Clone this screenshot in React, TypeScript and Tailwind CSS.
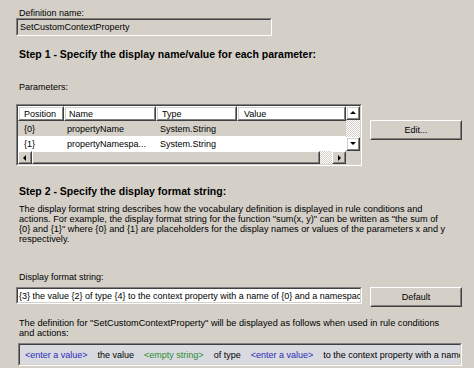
import React from 'react'

function Sunken({ className = '', inner = '', children }: { className?: string; inner?: string; children?: React.ReactNode }) {
    return (
        <div className={`border border-t-[#808080] border-l-[#808080] border-b-white border-r-white ${className}`}>
            <div className={`h-full border border-t-[#404040] border-l-[#404040] border-b-[#d4d0c8] border-r-[#d4d0c8] overflow-hidden ${inner}`}>
                {children}
            </div>
        </div>
    )
}

function Raised({ className = '', inner = '', children }: { className?: string; inner?: string; children?: React.ReactNode }) {
    return (
        <div className={`border border-t-white border-l-white border-b-[#404040] border-r-[#404040] ${className}`}>
            <div className={`h-full border border-t-[#d4d0c8] border-l-[#d4d0c8] border-b-[#808080] border-r-[#808080] flex items-center justify-center ${inner}`}>
                {children}
            </div>
        </div>
    )
}

function Arrow({ dir }: { dir: 'up' | 'down' | 'left' | 'right' }) {
    const pts = {
        up: '1,5 4,2 7,5',
        down: '1,2 4,5 7,2',
        left: '5,1 2,4 5,7',
        right: '3,1 6,4 3,7',
    }[dir]
    return (
        <svg width="8" height="8" viewBox="0 0 8 8">
            <polygon points={pts} fill="#000" />
        </svg>
    )
}

const track = 'bg-[repeating-conic-gradient(#ffffff_0_25%,#d4d0c8_0_50%)] bg-[length:2px_2px]'

function ParamList() {
    const rows = [
        { pos: '{0}', name: 'propertyName', type: 'System.String', bg: 'bg-[#d4d0c8]' },
        { pos: '{1}', name: 'propertyNamespa...', type: 'System.String', bg: 'bg-white' },
    ]
    return (
        <Sunken className="w-[346px] h-[62px]" inner="flex flex-col bg-white">
            <div className="flex h-[45px]">
                <div className="flex-1 flex flex-col min-w-0">
                    <div className="flex h-[15px]">
                        <Raised className="w-[46px]" inner="!justify-start pl-[4px]">Position</Raised>
                        <Raised className="w-[92px]" inner="!justify-start pl-[3px]">Name</Raised>
                        <Raised className="w-[81px]" inner="!justify-start pl-[4px]">Type</Raised>
                        <Raised className="flex-1" inner="!justify-start pl-[5px]">Value</Raised>
                    </div>
                    {rows.map(r => (
                        <div key={r.pos} className={`flex h-[15px] items-center whitespace-nowrap ${r.bg}`}>
                            <div className="w-[46px] pl-[6px]">{r.pos}</div>
                            <div className="w-[92px] pl-[3px]">{r.name}</div>
                            <div className="w-[81px] pl-[4px]">{r.type}</div>
                            <div className="flex-1" />
                        </div>
                    ))}
                </div>
                <div className="w-[14px] flex flex-col">
                    <Raised className="h-[14px]"><Arrow dir="up" /></Raised>
                    <div className={`flex-1 ${track}`} />
                    <Raised className="h-[14px]"><Arrow dir="down" /></Raised>
                </div>
            </div>
            <div className="flex flex-1 bg-[#d4d0c8]">
                <Raised className="w-[14px]"><Arrow dir="left" /></Raised>
                <Raised className="w-[288px]" />
                <div className={`flex-1 ${track}`} />
                <Raised className="w-[14px]"><Arrow dir="right" /></Raised>
                <div className="w-[14px] bg-[#d4d0c8]" />
            </div>
        </Sunken>
    )
}

export default function App() {
    return (
        <div className="w-[474px] h-[368px] overflow-hidden bg-[#d4d0c8] text-black text-[9px] leading-[10px] font-['Liberation_Sans',Arial,sans-serif] pl-[16px] pt-[8px]">
            <div className="pl-[3px] h-[10px]">Definition name:</div>
            <Sunken className="w-[256px] h-[18px]" inner="flex items-center pl-[2px] bg-[#d4d0c8]">
                SetCustomContextProperty
            </Sunken>

            <div className="mt-[13px] pl-[3px] h-[10px] font-bold text-[10.5px] whitespace-nowrap">
                Step 1 - Specify the display name/value for each parameter:
            </div>

            <div className="mt-[23px] pl-[3px] h-[10px]">Parameters:</div>

            <div className="mt-[12px] flex items-start">
                <ParamList />
                <Raised className="ml-[8px] mt-[16px] w-[92px] h-[20px]">Edit...</Raised>
            </div>

            <div className="mt-[20px] pl-[3px] h-[10px] font-bold text-[10.5px] whitespace-nowrap">
                Step 2 - Specify the display format string:
            </div>

            <p className="mt-[8px] pl-[3px] whitespace-nowrap text-[9.2px]">
                The display format string describes how the vocabulary definition is displayed in rule conditions and
                <br />
                actions. For example, the display format string for the function "sum(x, y)" can be written as "the sum of
                <br />
                {'{0}'} and {'{1}'}" where {'{0}'} and {'{1}'} are placeholders for the display names or values of the parameters x and y
                <br />
                respectively.
            </p>

            <div className="mt-[28px] pl-[3px] h-[10px]">Display format string:</div>

            <div className="mt-[5px] flex items-start">
                <Sunken className="w-[346px] h-[17px]" inner="flex items-center pl-[1px] bg-white whitespace-nowrap">
                    {'{3} the value {2} of type {4} to the context property with a name of {0} and a namespace of {1}'}
                </Sunken>
                <Raised className="ml-[8px] w-[92px] h-[20px]">Default</Raised>
            </div>

            <p className="mt-[11px] pl-[3px] whitespace-nowrap text-[9.2px]">
                The definition for "SetCustomContextProperty" will be displayed as follows when used in rule conditions
                <br />
                and actions:
            </p>

            <Sunken className="mt-[5px] ml-[2px] w-[444px] h-[23px]" inner="flex items-center gap-[10px] pl-[5px] bg-[#d9dae0] whitespace-nowrap">
                <span className="text-[#2b2bb8]">&lt;enter a value&gt;</span>
                <span>the value</span>
                <span className="text-[#2e8b2e]">&lt;empty string&gt;</span>
                <span>of type</span>
                <span className="text-[#2b2bb8]">&lt;enter a value&gt;</span>
                <span>to the context property with a name of</span>
            </Sunken>
        </div>
    )
}
